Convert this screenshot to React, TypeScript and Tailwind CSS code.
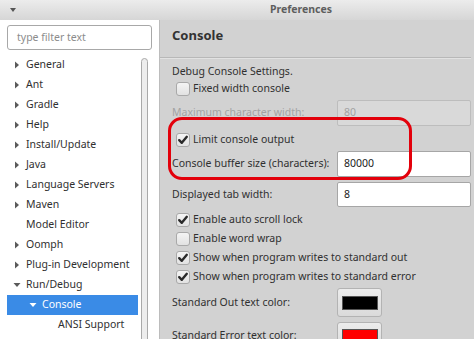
import React from "react";

const font = { fontFamily: '"Noto Sans", "Open Sans", sans-serif' };

type Node = { label: string; level: number; arrow?: "right" | "down"; selected?: boolean };

const tree: Node[] = [
  { label: "General", level: 0, arrow: "right" },
  { label: "Ant", level: 0, arrow: "right" },
  { label: "Gradle", level: 0, arrow: "right" },
  { label: "Help", level: 0, arrow: "right" },
  { label: "Install/Update", level: 0, arrow: "right" },
  { label: "Java", level: 0, arrow: "right" },
  { label: "Language Servers", level: 0, arrow: "right" },
  { label: "Maven", level: 0, arrow: "right" },
  { label: "Model Editor", level: 0 },
  { label: "Oomph", level: 0, arrow: "right" },
  { label: "Plug-in Development", level: 0, arrow: "right" },
  { label: "Run/Debug", level: 0, arrow: "down" },
  { label: "Console", level: 1, arrow: "down", selected: true },
  { label: "ANSI Support", level: 2 },
];

const Arrow: React.FC<{ dir: "right" | "down"; white?: boolean }> = ({ dir, white }) => (
  <svg width="8" height="8" viewBox="0 0 8 8" className="shrink-0">
    {dir === "right" ? (
      <path d="M2 0.5 L6 4 L2 7.5 Z" fill={white ? "#ffffff" : "#5a5a5a"} />
    ) : (
      <path d="M0.5 2 L7.5 2 L4 6 Z" fill={white ? "#ffffff" : "#5a5a5a"} />
    )}
  </svg>
);

const Check: React.FC<{ checked?: boolean }> = ({ checked }) => (
  <div className="w-[14px] h-[14px] shrink-0 rounded-[3px] border border-[#a9a9a9] bg-gradient-to-b from-[#f4f4f4] to-[#e2e2e2] flex items-center justify-center">
    {checked && (
      <svg width="12" height="12" viewBox="0 0 12 12">
        <path d="M2.2 6.2 L4.8 8.8 L9.8 2.8" stroke="#2a2a2a" strokeWidth="2.4" fill="none" strokeLinecap="round" strokeLinejoin="round" />
      </svg>
    )}
  </div>
);

const CheckRow: React.FC<{ label: string; checked?: boolean; h: string }> = ({ label, checked, h }) => (
  <div className={`flex items-center gap-[3px] pl-[4px] ${h}`}>
    <Check checked={checked} />
    <span>{label}</span>
  </div>
);

const Field: React.FC<{ label: string; value: string; disabled?: boolean; h: string }> = ({ label, value, disabled, h }) => (
  <div className={`flex items-center ${h}`}>
    <span className={`w-[165px] shrink-0 ${disabled ? "text-[#a3a3a3]" : ""}`}>{label}</span>
    <div
      className={`flex-1 h-full rounded-[2px] border px-[6px] flex items-center ${
        disabled ? "bg-[#d9d9d9] border-[#bdbdbd] text-[#a3a3a3]" : "bg-white border-[#a6a6a6] text-[#222]"
      }`}
    >
      {value}
    </div>
  </div>
);

const ColorRow: React.FC<{ label: string; color: string; h: string }> = ({ label, color, h }) => (
  <div className={`flex items-center ${h}`}>
    <span className="w-[165px] shrink-0">{label}</span>
    <div className="w-[45px] h-[29px] rounded-[3px] border border-[#b3b3b3] bg-gradient-to-b from-[#ececec] to-[#dadada] flex items-center justify-center">
      <div className="w-[36px] h-[14px] border border-[#555]" style={{ backgroundColor: color }} />
    </div>
  </div>
);

export default function App() {
  return (
    <div className="relative w-[474px] h-[339px] overflow-hidden bg-[#d2d2d2] text-[10.5px] text-[#303030]" style={font}>
      {/* title bar */}
      <div className="flex items-center h-[20px] bg-gradient-to-b from-[#ececec] to-[#d6d6d6]">
        <div className="w-[128px] pl-[10px] flex items-center">
          <svg width="6" height="4" viewBox="0 0 6 4">
            <path d="M0 0 L6 0 L3 4 Z" fill="#555" />
          </svg>
        </div>
        <div className="flex-1 text-center font-bold text-[#5e5e5e]">Preferences</div>
      </div>

      <div className="flex h-[319px]">
        {/* left tree */}
        <div className="w-[160px] shrink-0 bg-white border-r border-[#bcbcbc] pl-[7px] pt-[5px]">
          <div className="w-[145px] h-[25px] rounded-[3px] border border-[#a8a8a8] flex items-center pl-[9px] text-[#8c8c8c]">
            type filter text
          </div>
          <div className="flex">
            <div className="w-[131px] mt-[5px]">
              {tree.map((n) => (
                <div
                  key={n.label}
                  className={`h-[20px] flex items-center ${n.selected ? "bg-[#3a8be6] text-white" : ""}`}
                  style={{ paddingLeft: 6 + n.level * 16 }}
                >
                  <div className="w-[13px] shrink-0 flex items-center">
                    {n.arrow && <Arrow dir={n.arrow} white={n.selected} />}
                  </div>
                  <span>{n.label}</span>
                </div>
              ))}
            </div>
            <div className="ml-[3px] mt-[8px] w-[7px] h-[300px] rounded-full border border-[#a9a9a9] bg-[#ededed]" />
          </div>
        </div>

        {/* right page */}
        <div className="flex-1 pr-[3px] overflow-hidden">
          <div className="h-[37px] flex items-center pl-[12px] pb-[5px] font-bold text-[13px] text-[#333]">Console</div>
          <div className="h-[1px] bg-[#b8b8b8]" />
          <div className="h-[1px] bg-[#e2e2e2]" />
          <div className="pl-[12px] pt-[5px]">
            <div className="h-[16px] flex items-center">Debug Console Settings.</div>
            <CheckRow label="Fixed width console" h="h-[18px]" />
            <div className="h-[2px]" />
            <Field label="Maximum character width:" value="80" disabled h="h-[26px]" />
            <CheckRow label="Limit console output" checked h="h-[25px] pt-[3px]" />
            <Field label="Console buffer size (characters):" value="80000" h="h-[26px]" />
            <div className="h-[5px]" />
            <Field label="Displayed tab width:" value="8" h="h-[25px]" />
            <div className="h-[2px]" />
            <CheckRow label="Enable auto scroll lock" checked h="h-[19px] pt-[2px]" />
            <CheckRow label="Enable word wrap" h="h-[19px] pt-[2px]" />
            <CheckRow label="Show when program writes to standard out" checked h="h-[19px] pt-[2px]" />
            <CheckRow label="Show when program writes to standard error" checked h="h-[19px] pt-[2px]" />
            <div className="h-[3px]" />
            <ColorRow label="Standard Out text color:" color="#000000" h="h-[29px]" />
            <div className="h-[4px]" />
            <ColorRow label="Standard Error text color:" color="#ff0000" h="h-[30px]" />
          </div>
        </div>
      </div>

      {/* red highlight annotation */}
      <div className="absolute left-[168px] top-[117px] w-[244px] h-[63px] rounded-[14px] border-[3px] border-[#e3000b]" />
    </div>
  );
}
